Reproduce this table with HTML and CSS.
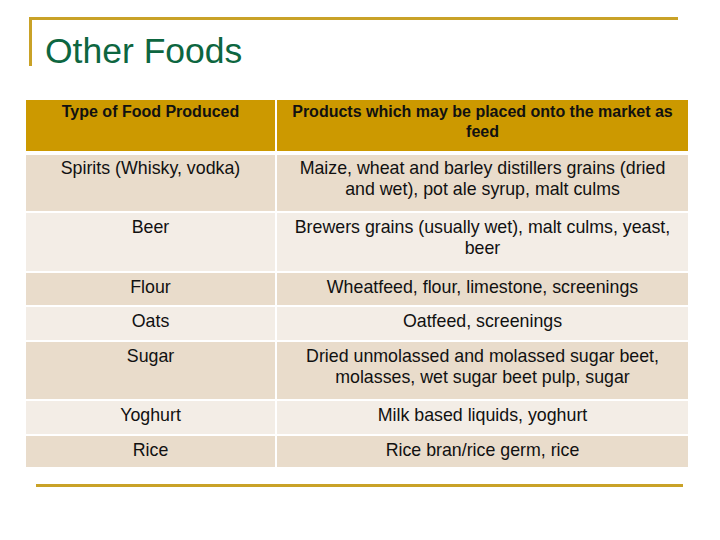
FILE: index.html
```html
<!DOCTYPE html>
<html>
<head>
<meta charset="utf-8">
<link rel="stylesheet" href="styles.css">
</head>
<body>
<div class="slide">
  <div class="title-box"><h1 class="title">Other Foods</h1></div>
  <div class="table">
    <div class="thead">
      <div class="th">Type of Food Produced</div>
      <div class="th">Products which may be placed onto the market as<br>feed</div>
    </div>
    <div class="tbody">
      <div class="td dark r1">Spirits (Whisky, vodka)</div>
      <div class="td dark r1">Maize, wheat and barley distillers grains (dried<br>and wet), pot ale syrup, malt culms</div>
      <div class="td light r2">Beer</div>
      <div class="td light r2">Brewers grains (usually wet), malt culms, yeast,<br>beer</div>
      <div class="td dark r3">Flour</div>
      <div class="td dark r3">Wheatfeed, flour, limestone, screenings</div>
      <div class="td light r4">Oats</div>
      <div class="td light r4">Oatfeed, screenings</div>
      <div class="td dark r5">Sugar</div>
      <div class="td dark r5">Dried unmolassed and molassed sugar beet,<br>molasses, wet sugar beet pulp, sugar</div>
      <div class="td light r6">Yoghurt</div>
      <div class="td light r6">Milk based liquids, yoghurt</div>
      <div class="td dark r7">Rice</div>
      <div class="td dark r7">Rice bran/rice germ, rice</div>
    </div>
  </div>
  <div class="rule"></div>
</div>
</body>
</html>
```
FILE: styles.css
```css
html, body {
  margin: 0;
  padding: 0;
  background: #ffffff;
}
.slide {
  width: 720px;
  height: 540px;
  padding-top: 17px;
  box-sizing: border-box;
  font-family: "Liberation Sans", Arial, sans-serif;
  color: #111111;
}
.title-box {
  margin-left: 29px;
  width: 646px;
  height: 46px;
  border-top: 3px solid #c9a227;
  border-left: 3px solid #c9a227;
}
.title {
  margin: 0;
  padding: 14px 0 0 13px;
  font-size: 35.5px;
  line-height: 35.5px;
  font-weight: normal;
  color: #0d6640;
  white-space: nowrap;
}
.table {
  margin: 34px 0 0 26px;
  width: 662px;
}
.thead, .tbody {
  display: grid;
  grid-template-columns: 249px 411px;
  column-gap: 2px;
}
.thead {
  height: 51px;
  margin-bottom: 4px;
}
.tbody {
  row-gap: 2px;
  grid-template-rows: 56px 58px 32px 33px 57px 33px 31px;
}
.th {
  background: #cc9900;
  font-weight: bold;
  font-size: 16px;
  line-height: 19.5px;
  padding-top: 2px;
  text-align: center;
  white-space: nowrap;
}
.td {
  font-size: 17.8px;
  line-height: 20.7px;
  padding-top: 3px;
  text-align: center;
  white-space: nowrap;
}
.dark {
  background: #e9dccb;
}
.light {
  background: #f3ede6;
}
.r2, .r3, .r4, .r5, .r6, .r7 {
  padding-top: 4px;
}
.rule {
  margin: 17px 0 0 36px;
  width: 647px;
  height: 3px;
  background: #c9a227;
}
```
